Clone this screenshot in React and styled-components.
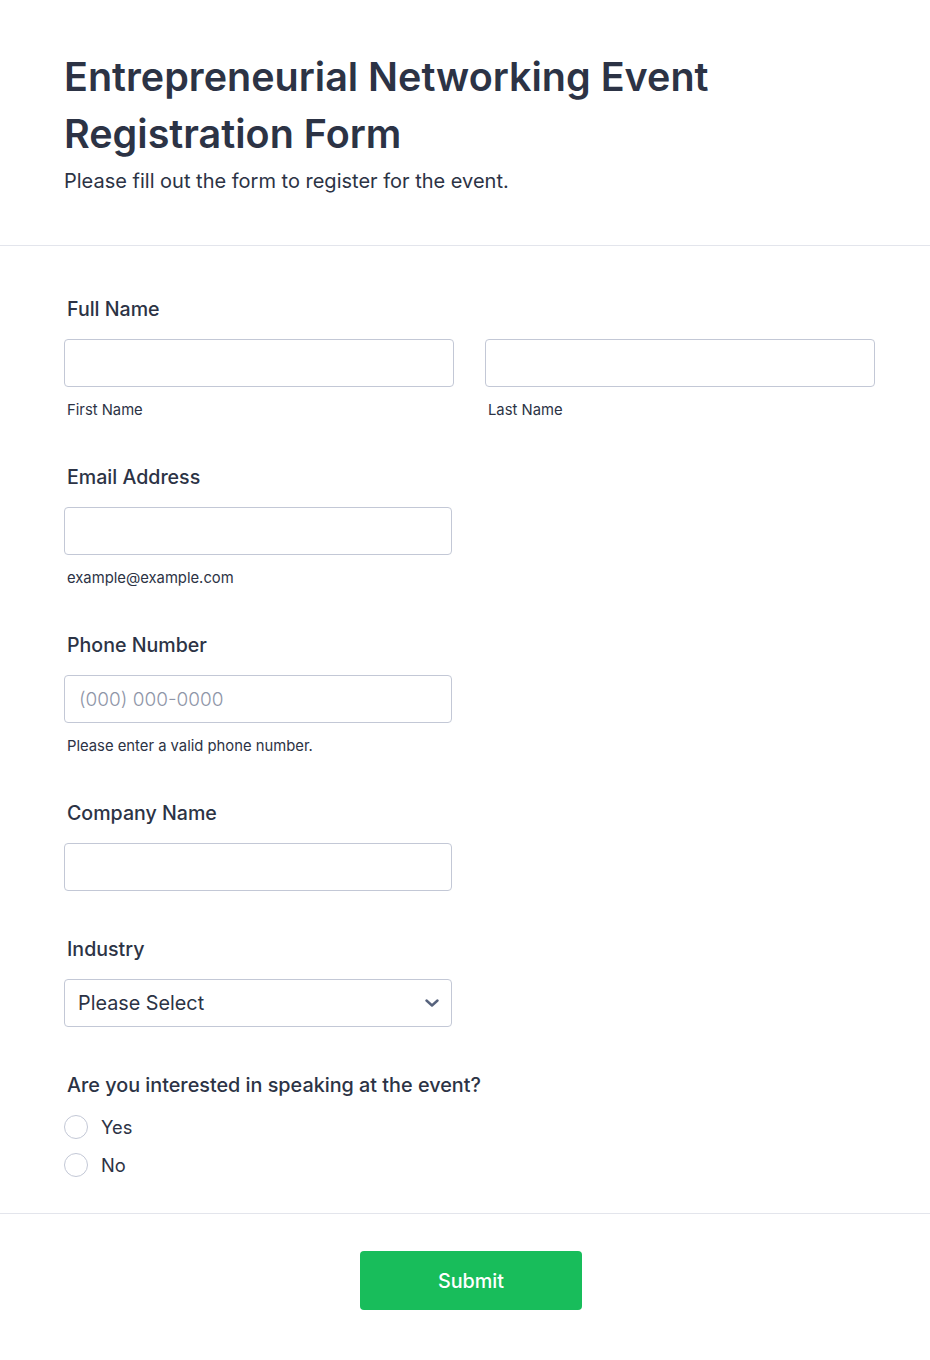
import React from "react";
import styled, { createGlobalStyle } from "styled-components";

const Global = createGlobalStyle`
  html, body { margin: 0; padding: 0; background: #fff; }
  body { font-family: Inter, "Noto Sans", sans-serif; color: #2c3345; }
  * { box-sizing: border-box; }
`;

const Page = styled.div`
  width: 930px;
  background: #fff;
`;

const Header = styled.header`
  padding: 49px 40px 52px 64px;
  border-bottom: 1px solid #e3e5ec;
`;

const Title = styled.h1`
  margin: 0;
  font-size: 39.5px;
  line-height: 57px;
  font-weight: 600;
  color: #2c3345;
`;

const Subtitle = styled.p`
  margin: 6px 0 0;
  font-size: 20px;
  line-height: 24px;
  color: #2c3345;
`;

const Form = styled.form`
  padding: 52px 55px 36px 64px;
  display: flex;
  flex-direction: column;
  gap: 47px;
  border-bottom: 1px solid #e3e5ec;
`;

const Field = styled.div`
  display: flex;
  flex-direction: column;
`;

const Label = styled.label`
  display: block;
  padding-left: 3px;
  font-size: ${(p) => p.$size || 19.6}px;
  line-height: 22px;
  font-weight: 500;
  color: #2c3345;
  margin-bottom: 19px;
`;

const Row = styled.div`
  display: flex;
  gap: 31px;
`;

const Col = styled.div`
  width: ${(p) => p.$w || 388}px;
  display: flex;
  flex-direction: column;
`;

const Input = styled.input`
  width: 100%;
  height: 48px;
  border: 1px solid #c3c8d6;
  border-radius: 4px;
  padding: 0 14px;
  font-family: Inter, sans-serif;
  font-size: 19px;
  color: #2c3345;
  background: #fff;
  outline: none;
  &::placeholder { color: #8f96a8; font-weight: 300; }
`;

const Sub = styled.span`
  display: block;
  padding-left: 3px;
  margin-top: 14px;
  font-size: 14.8px;
  line-height: 18px;
  color: #2c3345;
`;

const SelectBox = styled.div`
  width: 388px;
  height: 48px;
  border: 1px solid #c3c8d6;
  border-radius: 4px;
  display: flex;
  align-items: center;
  justify-content: space-between;
  padding: 0 12px 0 13px;
  font-size: 19.8px;
  color: #2c3345;
`;

const Options = styled.div`
  display: flex;
  flex-direction: column;
  gap: 14px;
`;

const Option = styled.label`
  display: flex;
  align-items: center;
  gap: 13px;
  font-size: 18.3px;
  line-height: 24px;
  color: #2c3345;
`;

const Radio = styled.span`
  width: 24px;
  height: 24px;
  border-radius: 50%;
  border: 1px solid #c3c8d6;
  background: #fff;
  flex: none;
`;

const Footer = styled.div`
  display: flex;
  justify-content: center;
  padding: 37px 0 50px 12px;
`;

const Submit = styled.button`
  width: 222px;
  height: 59px;
  border: none;
  border-radius: 4px;
  background: #18bd5b;
  color: #fff;
  font-family: Inter, sans-serif;
  font-size: 19.8px;
  font-weight: 500;
  cursor: pointer;
`;

const Chevron = () => (
  <svg width="14" height="9" viewBox="0 0 14 9" fill="none">
    <path d="M1.5 1.5 L7 6.5 L12.5 1.5" stroke="#57637d" strokeWidth="2.4" strokeLinecap="round" strokeLinejoin="round" />
  </svg>
);

export default function App() {
  return (
    <Page>
      <Global />
      <Header>
        <Title>
          Entrepreneurial Networking Event
          <br />
          Registration Form
        </Title>
        <Subtitle>Please fill out the form to register for the event.</Subtitle>
      </Header>
      <Form onSubmit={(e) => e.preventDefault()}>
        <Field>
          <Label>Full Name</Label>
          <Row>
            <Col $w={390}>
              <Input type="text" />
              <Sub>First Name</Sub>
            </Col>
            <Col $w={390}>
              <Input type="text" />
              <Sub>Last Name</Sub>
            </Col>
          </Row>
        </Field>
        <Field>
          <Label>Email Address</Label>
          <Col>
            <Input type="email" />
            <Sub>example@example.com</Sub>
          </Col>
        </Field>
        <Field>
          <Label>Phone Number</Label>
          <Col>
            <Input type="tel" placeholder="(000) 000-0000" />
            <Sub>Please enter a valid phone number.</Sub>
          </Col>
        </Field>
        <Field>
          <Label>Company Name</Label>
          <Col>
            <Input type="text" />
          </Col>
        </Field>
        <Field>
          <Label>Industry</Label>
          <SelectBox>
            <span>Please Select</span>
            <Chevron />
          </SelectBox>
        </Field>
        <Field>
          <Label $size={19.8}>Are you interested in speaking at the event?</Label>
          <Options>
            <Option>
              <Radio />
              Yes
            </Option>
            <Option>
              <Radio />
              No
            </Option>
          </Options>
        </Field>
      </Form>
      <Footer>
        <Submit type="button">Submit</Submit>
      </Footer>
    </Page>
  );
}
